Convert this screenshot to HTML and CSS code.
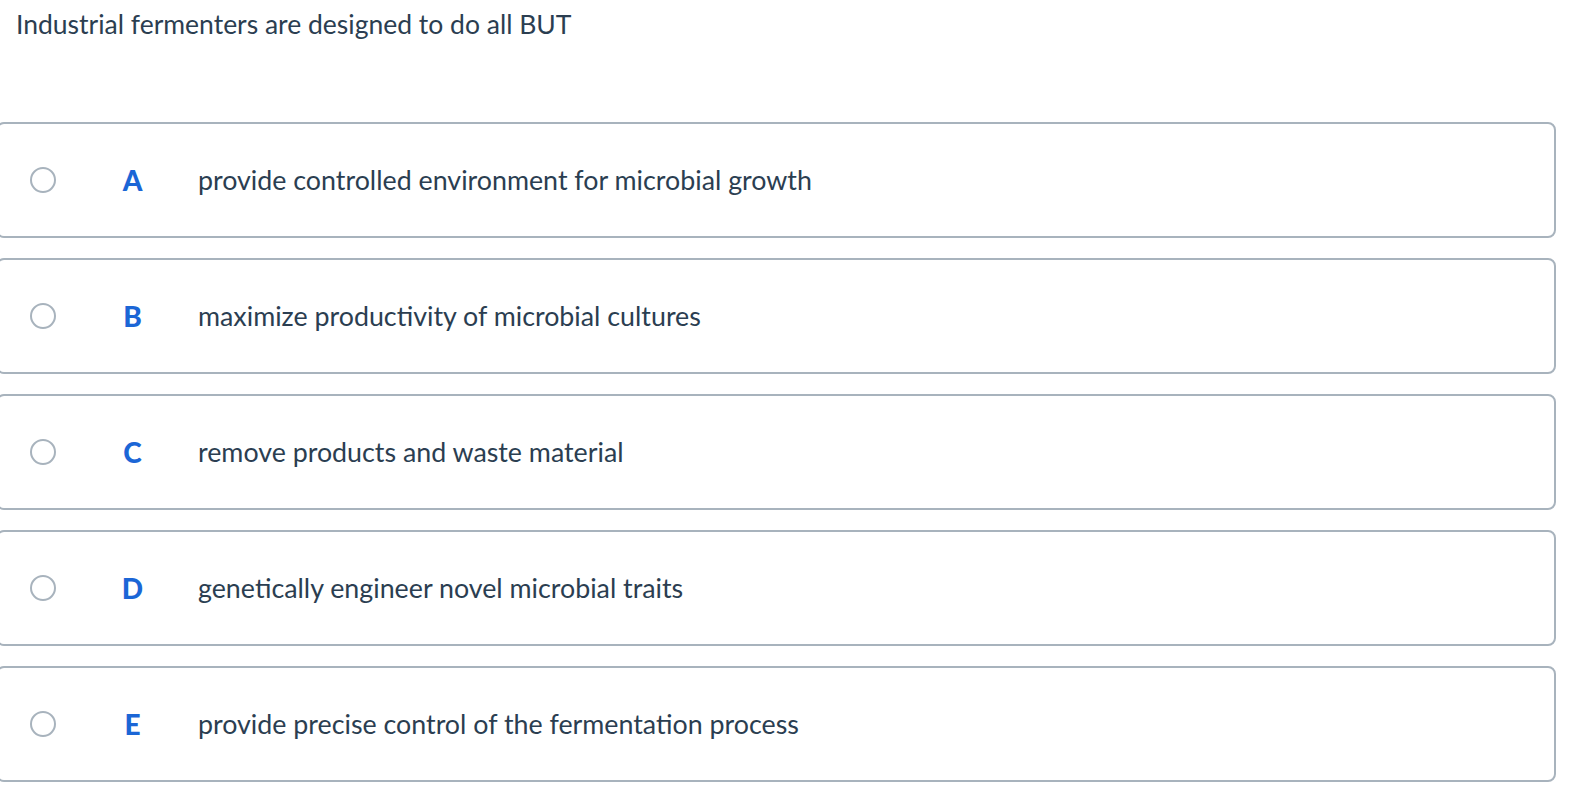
FILE: index.html
```html
<!DOCTYPE html>
<html>
<head>
<meta charset="utf-8">
<link rel="stylesheet" href="styles.css">
</head>
<body>
<div class="question">
  <p class="prompt">Industrial fermenters are designed to do all BUT</p>
  <div class="options">
    <label class="option"><span class="radio"></span><span class="letter">A</span><span class="text">provide controlled environment for microbial growth</span></label>
    <label class="option"><span class="radio"></span><span class="letter">B</span><span class="text">maximize productivity of microbial cultures</span></label>
    <label class="option"><span class="radio"></span><span class="letter">C</span><span class="text">remove products and waste material</span></label>
    <label class="option"><span class="radio"></span><span class="letter">D</span><span class="text">genetically engineer novel microbial traits</span></label>
    <label class="option"><span class="radio"></span><span class="letter">E</span><span class="text">provide precise control of the fermentation process</span></label>
  </div>
</div>
</body>
</html>
```
FILE: styles.css
```css
html, body {
  margin: 0;
  padding: 0;
  background: #ffffff;
}
body {
  font-family: Lato, "Open Sans", sans-serif;
  color: #2b3e51;
}
.question {
  padding: 0 14px 0 0;
}
.prompt {
  margin: 0;
  padding: 7px 0 0 16px;
  font-size: 26.5px;
  line-height: 34px;
  height: 122px;
  box-sizing: border-box;
}
.options {
  display: flex;
  flex-direction: column;
  gap: 20px;
  margin-left: -4px;
}
.option {
  display: flex;
  align-items: center;
  height: 116px;
  box-sizing: border-box;
  border: 2px solid #a8b3bd;
  border-radius: 8px;
  padding-left: 32px;
}
.radio {
  width: 26px;
  height: 26px;
  box-sizing: border-box;
  border: 2.5px solid #a8b3bd;
  border-radius: 50%;
  flex: none;
}
.letter {
  width: 124px;
  text-align: center;
  font-weight: 900;
  color: #1b66d6;
  font-size: 28px;
  flex: none;
  padding-left: 29px;
  box-sizing: border-box;
}
.text {
  font-size: 26.8px;
  padding-left: 18px;
}
```
